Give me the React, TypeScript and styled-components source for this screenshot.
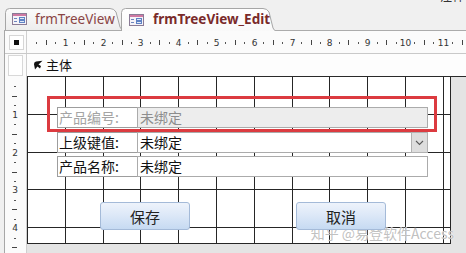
import React from "react";
import styled, { createGlobalStyle } from "styled-components";

const GlobalStyle = createGlobalStyle`
  html, body { margin: 0; padding: 0; background: #f0f0f0; }
  body { font-family: "Noto Sans", "Noto Sans CJK SC", sans-serif; }
  #root { width: 466px; height: 253px; }
`;

const CM = 37.8;
const CJK = `"Noto Sans CJK SC", "Noto Sans", sans-serif`;

const Screen = styled.div`
  position: relative;
  width: 466px;
  height: 253px;
  overflow: hidden;
  background: #f0f0f0;
  display: flex;
  flex-direction: column;
`;

const TopStrip = styled.div`
  height: 8px;
  flex: none;
  display: flex;
  justify-content: flex-end;
  align-items: flex-end;
  overflow: hidden;
  padding-right: 2px;
`;

const CutText = styled.span`
  font: 12px/12px ${CJK};
  color: #333;
  margin-bottom: 6px;
`;

const TabBar = styled.div`
  height: 22px;
  flex: none;
  display: flex;
  align-items: flex-start;
  padding-left: 5px;
  position: relative;
  z-index: 2;
`;

const Tab = styled.div<{ $active?: boolean; $width: number }>`
  position: relative;
  isolation: isolate;
  width: ${(p) => p.$width}px;
  height: ${(p) => (p.$active ? 23 : 22)}px;
  margin-left: ${(p) => (p.$active ? -2 : 0)}px;
  display: flex;
  align-items: center;
  padding-left: ${(p) => (p.$active ? 8 : 7)}px;
  gap: ${(p) => (p.$active ? 9 : 8)}px;
  box-sizing: border-box;
  color: ${(p) => (p.$active ? "#7a2b2b" : "#8a4444")};
  font-family: "Noto Sans", sans-serif;
  font-size: 13.5px;
  font-weight: ${(p) => (p.$active ? 700 : 400)};
  white-space: nowrap;
`;

const TabShape = styled.svg`
  position: absolute;
  left: 0;
  top: 0;
  z-index: -1;
`;

const TabLabel = styled.span`
  line-height: 22px;
  margin-top: -1px;
`;

const DocPane = styled.div`
  flex: 1;
  min-height: 0;
  margin-left: 4px;
  border-left: 1px solid #a7a7a7;
  border-top: 1px solid #ababab;
  background: #fbfbfb;
  display: flex;
  flex-direction: column;
`;

const RulerRow = styled.div`
  height: 22px;
  flex: none;
  display: flex;
  border-bottom: 1px solid #c9c9c9;
`;

const Corner = styled.div`
  width: 22px;
  flex: none;
  border-right: 1px solid #cfcfcf;
  display: flex;
  align-items: center;
  justify-content: center;
  padding-left: 2px;
  box-sizing: border-box;
`;

const SelectorBox = styled.div`
  width: 15px;
  height: 15px;
  box-sizing: border-box;
  border: 1px solid #d6d6d6;
  background: #fff;
  display: flex;
  align-items: center;
  justify-content: center;
`;

const BlackSquare = styled.div`
  width: 5px;
  height: 5px;
  background: #111;
`;

const HRuler = styled.div`
  flex: 1;
  position: relative;
`;

const DesignRow = styled.div`
  flex: 1;
  min-height: 0;
  display: flex;
`;

const VRuler = styled.div`
  width: 22px;
  flex: none;
  box-sizing: border-box;
  border-right: 1px solid #cfcfcf;
  display: flex;
  flex-direction: column;
`;

const VRulerTop = styled.div`
  height: 23px;
  flex: none;
  display: flex;
  align-items: stretch;
  padding: 1px 3px 1px 3px;
  box-sizing: border-box;
`;

const VRulerTopBox = styled.div`
  flex: 1;
  border: 1px solid #d8d8d8;
  background: #fff;
`;

const DesignArea = styled.div`
  flex: 1;
  min-width: 0;
  display: flex;
  flex-direction: column;
`;

const SectionBar = styled.div`
  height: 22px;
  flex: none;
  border-bottom: 1px solid #2a2a2a;
  background: #fdfdfd;
  display: flex;
  align-items: center;
  padding-left: 6px;
  gap: 3px;
  font: 13px/22px ${CJK};
  color: #111;
`;

const CanvasRow = styled.div`
  flex: 1;
  min-height: 0;
  background: #e4e4e4;
  display: flex;
  align-items: flex-start;
`;

const FormCanvas = styled.div`
  position: relative;
  width: 424px;
  height: 167px;
  flex: none;
  background: #fff;
`;

const GridLayer = styled.svg`
  position: absolute;
  left: 0;
  top: 0;
`;

const Fields = styled.div`
  position: relative;
  z-index: 1;
  display: flex;
  flex-direction: column;
  gap: 4px;
  padding: 30px 0 0 30px;
`;

const FieldRow = styled.div<{ $extraTop?: number }>`
  position: relative;
  display: flex;
  height: 21px;
  margin-top: ${(p) => p.$extraTop ?? 0}px;
`;

const FieldLabel = styled.div<{ $muted?: boolean }>`
  width: 81px;
  height: 21px;
  box-sizing: border-box;
  border: 1px solid #9d9d9d;
  background: #fff;
  color: ${(p) => (p.$muted ? "#a4a4a4" : "#111")};
  font: 14px/19px ${CJK};
  padding-left: 1px;
  white-space: nowrap;
  overflow: hidden;
`;

const TextBox = styled.div<{ $disabled?: boolean }>`
  width: 291px;
  height: 21px;
  margin-left: -1px;
  box-sizing: border-box;
  border: 1px solid #ababab;
  background: ${(p) => (p.$disabled ? "#ededed" : "#fff")};
  color: ${(p) => (p.$disabled ? "#8d8d8d" : "#111")};
  font: 14px/19px ${CJK};
  padding-left: 2px;
  display: flex;
  justify-content: space-between;
`;

const DropButton = styled.div`
  width: 17px;
  height: 21px;
  margin: -1px -1px 0 0;
  box-sizing: border-box;
  border: 1px solid #b2b2b2;
  background: #dedede;
  display: flex;
  align-items: center;
  justify-content: center;
`;

const Highlight = styled.div`
  position: absolute;
  left: -10px;
  top: -11px;
  width: 390px;
  height: 36px;
  box-sizing: border-box;
  border: 3px solid #dc3b40;
  pointer-events: none;
`;

const ButtonRow = styled.div`
  display: flex;
  gap: 106px;
  margin: 21px 0 0 43px;
`;

const FormButton = styled.div`
  width: 90px;
  height: 28px;
  box-sizing: border-box;
  border: 1px solid #a4bad8;
  border-radius: 3px;
  background: linear-gradient(#eef3fb, #dbe7f7 50%, #c6daf2);
  display: flex;
  align-items: center;
  justify-content: center;
  font: 15px/1 ${CJK};
  color: #222;
`;

const Watermark = styled.div`
  position: absolute;
  right: 12px;
  bottom: 12px;
  font: 14px/16px ${CJK};
  color: rgba(185, 185, 185, 0.9);
  text-shadow: 0 0 1px #fff, 0 0 1px #fff;
  white-space: nowrap;
  pointer-events: none;
`;

const FormIcon: React.FC = () => (
  <svg width="15" height="12" viewBox="0 0 15 12">
    <rect x="0.5" y="0.5" width="14" height="11" fill="#f5f3f8" stroke="#8a7b96" />
    <rect x="1" y="1" width="13" height="2" fill="#cf79a3" />
    <rect x="2" y="5" width="3" height="1" fill="#6e86bf" />
    <rect x="2" y="8" width="3" height="1" fill="#6e86bf" />
    <rect x="7.5" y="4.5" width="5" height="2" fill="#dfe8f6" stroke="#5f82c4" />
    <rect x="7.5" y="7.5" width="5" height="2" fill="#dfe8f6" stroke="#5f82c4" />
  </svg>
);

const TabOutline: React.FC<{ w: number; h: number; active?: boolean; id: string }> = ({ w, h, active, id }) => {
  const right = w - 13;
  const d = `M0.5 ${h} L0.5 4.5 Q0.5 0.5 4.5 0.5 L${right} 0.5 Q${right + 4} 0.5 ${right + 6} 4 L${w - 3} ${h - 3} Q${w - 1.5} ${h} ${w} ${h}`;
  return (
    <TabShape width={w} height={h} viewBox={`0 0 ${w} ${h}`}>
      <defs>
        <linearGradient id={id} x1="0" y1="0" x2="0" y2="1">
          <stop offset="0" stopColor={active ? "#ffffff" : "#fbfbfb"} />
          <stop offset="1" stopColor={active ? "#f9f9f9" : "#ededed"} />
        </linearGradient>
      </defs>
      <path d={d + " Z"} fill={`url(#${id})`} stroke="none" />
      <path d={d} fill="none" stroke="#a6a6a6" strokeWidth="1" />
    </TabShape>
  );
};

const HRulerMarks: React.FC = () => {
  const items: React.ReactNode[] = [];
  for (let q = 1; q < 48; q++) {
    const x = Math.round((q * CM) / 4);
    if (x > 438) break;
    if (q % 4 === 0) {
      items.push(
        <text key={q} x={x + 0.5} y={15} fontSize="9" textAnchor="middle" fill="#333" fontFamily="DejaVu Sans, sans-serif">
          {q / 4}
        </text>
      );
    } else if (q % 2 === 0) {
      items.push(<rect key={q} x={x} y={9} width={1} height={5} fill="#444" />);
    } else {
      items.push(<rect key={q} x={x} y={11} width={1} height={2} fill="#555" />);
    }
  }
  return (
    <svg width="439" height="22" style={{ position: "absolute", left: 0, top: 0 }}>
      {items}
    </svg>
  );
};

const VRulerMarks: React.FC = () => {
  const items: React.ReactNode[] = [];
  for (let q = 1; q < 24; q++) {
    const y = Math.round((q * CM) / 4);
    if (y > 175) break;
    if (q % 4 === 0) {
      items.push(
        <text key={q} x={10} y={y + 3} fontSize="9" textAnchor="middle" fill="#333" fontFamily="DejaVu Sans, sans-serif">
          {q / 4}
        </text>
      );
    } else if (q % 2 === 0) {
      items.push(<rect key={q} x={7} y={y} width={5} height={1} fill="#444" />);
    } else {
      items.push(<rect key={q} x={9} y={y} width={2} height={1} fill="#555" />);
    }
  }
  return (
    <svg width="21" height="176">
      {items}
    </svg>
  );
};

const GridLines: React.FC = () => {
  const w = 424;
  const h = 167;
  const xs: number[] = [];
  for (let k = 0; k * CM < w - 4; k++) xs.push(Math.round(k * CM));
  xs.push(w - 1);
  const ys: number[] = [];
  for (let k = 1; k * CM - 1 < h - 4; k++) ys.push(Math.round(k * CM - 1));
  ys.push(h - 1);
  return (
    <GridLayer width={w} height={h}>
      {xs.map((x) => (
        <rect key={"x" + x} x={x} y={0} width={1} height={h} fill="#262626" />
      ))}
      {ys.map((y) => (
        <rect key={"y" + y} x={0} y={y} width={w} height={1} fill="#262626" />
      ))}
    </GridLayer>
  );
};

const SectionIcon: React.FC = () => (
  <svg width="10" height="10" viewBox="0 0 10 10">
    <path d="M9.5 0.8 L3 1.5 Q0.8 2 1 4.2 L2 9.5 L4.5 6.5 L7 8.5 L8 6 L5.5 4.5 Z" fill="#111" />
  </svg>
);

const Chevron: React.FC = () => (
  <svg width="9" height="6" viewBox="0 0 9 6">
    <path d="M1 1 L4.5 4.5 L8 1" fill="none" stroke="#5a5a5a" strokeWidth="1.1" />
  </svg>
);

export default function App() {
  return (
    <>
      <GlobalStyle />
      <Screen>
        <TopStrip>
          <CutText>注释</CutText>
        </TopStrip>
        <TabBar>
          <Tab $width={118}>
            <TabOutline w={118} h={22} id="tabA" />
            <FormIcon />
            <TabLabel>frmTreeView</TabLabel>
          </Tab>
          <Tab $active $width={155}>
            <TabOutline w={155} h={23} active id="tabB" />
            <FormIcon />
            <TabLabel>frmTreeView_Edit</TabLabel>
          </Tab>
        </TabBar>
        <DocPane>
          <RulerRow>
            <Corner>
              <SelectorBox>
                <BlackSquare />
              </SelectorBox>
            </Corner>
            <HRuler>
              <HRulerMarks />
            </HRuler>
          </RulerRow>
          <DesignRow>
            <VRuler>
              <VRulerTop>
                <VRulerTopBox />
              </VRulerTop>
              <VRulerMarks />
            </VRuler>
            <DesignArea>
              <SectionBar>
                <SectionIcon />
                <span>主体</span>
              </SectionBar>
              <CanvasRow>
                <FormCanvas>
                  <GridLines />
                  <Fields>
                    <FieldRow>
                      <FieldLabel $muted>产品编号:</FieldLabel>
                      <TextBox $disabled>未绑定</TextBox>
                      <Highlight />
                    </FieldRow>
                    <FieldRow>
                      <FieldLabel>上级键值:</FieldLabel>
                      <TextBox>
                        <span>未绑定</span>
                        <DropButton>
                          <Chevron />
                        </DropButton>
                      </TextBox>
                    </FieldRow>
                    <FieldRow $extraTop={-1}>
                      <FieldLabel>产品名称:</FieldLabel>
                      <TextBox>未绑定</TextBox>
                    </FieldRow>
                    <ButtonRow>
                      <FormButton>保存</FormButton>
                      <FormButton>取消</FormButton>
                    </ButtonRow>
                  </Fields>
                </FormCanvas>
              </CanvasRow>
            </DesignArea>
          </DesignRow>
        </DocPane>
        <Watermark>知乎 @易登软件Access</Watermark>
      </Screen>
    </>
  );
}
